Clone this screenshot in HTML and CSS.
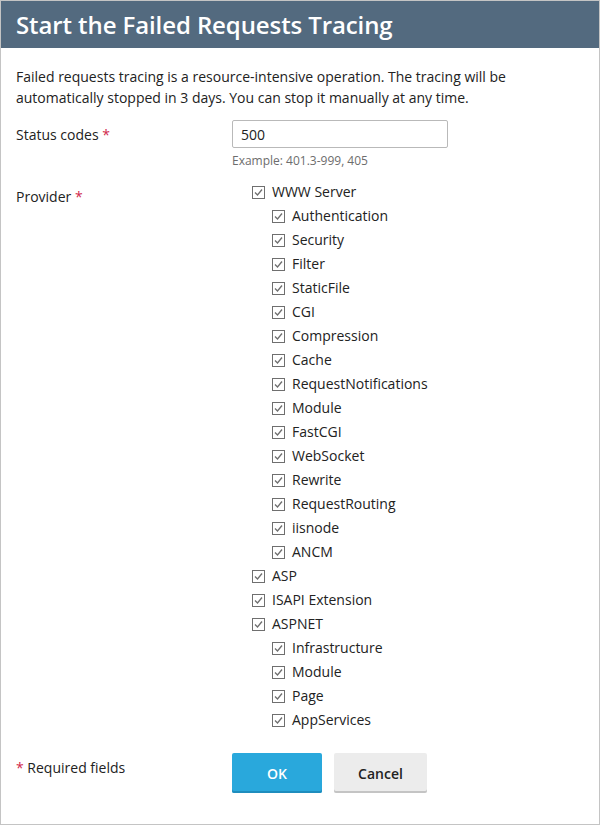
FILE: index.html
```html
<!DOCTYPE html>
<html>
<head>
<meta charset="utf-8">
<link rel="stylesheet" href="styles.css">
</head>
<body>
<div class="dialog">
  <div class="header"><h1 class="title">Start the Failed Requests Tracing</h1></div>
  <div class="content">
    <p class="intro">Failed requests tracing is a resource-intensive operation. The tracing will be automatically stopped in 3 days. You can stop it manually at any time.</p>
    <div class="row row-status">
      <div class="label">Status codes <span class="req">*</span></div>
      <div class="field">
        <input class="input" type="text" value="500">
        <div class="hint">Example: 401.3-999, 405</div>
      </div>
    </div>
    <div class="row row-provider">
      <div class="label label-provider">Provider <span class="req">*</span></div>
      <div class="field tree">
        <div class="cb"><span class="box"><svg width="13" height="13" viewBox="0 0 13 13"><rect x="0.5" y="0.5" width="12" height="12" fill="#fff" stroke="#6f6f6f"/><path d="M3 6.5 L5.5 9 L10 3.5" fill="none" stroke="#6f6f6f" stroke-width="1.3"/></svg></span>WWW Server</div>
        <div class="cb sub"><span class="box"><svg width="13" height="13" viewBox="0 0 13 13"><rect x="0.5" y="0.5" width="12" height="12" fill="#fff" stroke="#6f6f6f"/><path d="M3 6.5 L5.5 9 L10 3.5" fill="none" stroke="#6f6f6f" stroke-width="1.3"/></svg></span>Authentication</div>
        <div class="cb sub"><span class="box"><svg width="13" height="13" viewBox="0 0 13 13"><rect x="0.5" y="0.5" width="12" height="12" fill="#fff" stroke="#6f6f6f"/><path d="M3 6.5 L5.5 9 L10 3.5" fill="none" stroke="#6f6f6f" stroke-width="1.3"/></svg></span>Security</div>
        <div class="cb sub"><span class="box"><svg width="13" height="13" viewBox="0 0 13 13"><rect x="0.5" y="0.5" width="12" height="12" fill="#fff" stroke="#6f6f6f"/><path d="M3 6.5 L5.5 9 L10 3.5" fill="none" stroke="#6f6f6f" stroke-width="1.3"/></svg></span>Filter</div>
        <div class="cb sub"><span class="box"><svg width="13" height="13" viewBox="0 0 13 13"><rect x="0.5" y="0.5" width="12" height="12" fill="#fff" stroke="#6f6f6f"/><path d="M3 6.5 L5.5 9 L10 3.5" fill="none" stroke="#6f6f6f" stroke-width="1.3"/></svg></span>StaticFile</div>
        <div class="cb sub"><span class="box"><svg width="13" height="13" viewBox="0 0 13 13"><rect x="0.5" y="0.5" width="12" height="12" fill="#fff" stroke="#6f6f6f"/><path d="M3 6.5 L5.5 9 L10 3.5" fill="none" stroke="#6f6f6f" stroke-width="1.3"/></svg></span>CGI</div>
        <div class="cb sub"><span class="box"><svg width="13" height="13" viewBox="0 0 13 13"><rect x="0.5" y="0.5" width="12" height="12" fill="#fff" stroke="#6f6f6f"/><path d="M3 6.5 L5.5 9 L10 3.5" fill="none" stroke="#6f6f6f" stroke-width="1.3"/></svg></span>Compression</div>
        <div class="cb sub"><span class="box"><svg width="13" height="13" viewBox="0 0 13 13"><rect x="0.5" y="0.5" width="12" height="12" fill="#fff" stroke="#6f6f6f"/><path d="M3 6.5 L5.5 9 L10 3.5" fill="none" stroke="#6f6f6f" stroke-width="1.3"/></svg></span>Cache</div>
        <div class="cb sub"><span class="box"><svg width="13" height="13" viewBox="0 0 13 13"><rect x="0.5" y="0.5" width="12" height="12" fill="#fff" stroke="#6f6f6f"/><path d="M3 6.5 L5.5 9 L10 3.5" fill="none" stroke="#6f6f6f" stroke-width="1.3"/></svg></span>RequestNotifications</div>
        <div class="cb sub"><span class="box"><svg width="13" height="13" viewBox="0 0 13 13"><rect x="0.5" y="0.5" width="12" height="12" fill="#fff" stroke="#6f6f6f"/><path d="M3 6.5 L5.5 9 L10 3.5" fill="none" stroke="#6f6f6f" stroke-width="1.3"/></svg></span>Module</div>
        <div class="cb sub"><span class="box"><svg width="13" height="13" viewBox="0 0 13 13"><rect x="0.5" y="0.5" width="12" height="12" fill="#fff" stroke="#6f6f6f"/><path d="M3 6.5 L5.5 9 L10 3.5" fill="none" stroke="#6f6f6f" stroke-width="1.3"/></svg></span>FastCGI</div>
        <div class="cb sub"><span class="box"><svg width="13" height="13" viewBox="0 0 13 13"><rect x="0.5" y="0.5" width="12" height="12" fill="#fff" stroke="#6f6f6f"/><path d="M3 6.5 L5.5 9 L10 3.5" fill="none" stroke="#6f6f6f" stroke-width="1.3"/></svg></span>WebSocket</div>
        <div class="cb sub"><span class="box"><svg width="13" height="13" viewBox="0 0 13 13"><rect x="0.5" y="0.5" width="12" height="12" fill="#fff" stroke="#6f6f6f"/><path d="M3 6.5 L5.5 9 L10 3.5" fill="none" stroke="#6f6f6f" stroke-width="1.3"/></svg></span>Rewrite</div>
        <div class="cb sub"><span class="box"><svg width="13" height="13" viewBox="0 0 13 13"><rect x="0.5" y="0.5" width="12" height="12" fill="#fff" stroke="#6f6f6f"/><path d="M3 6.5 L5.5 9 L10 3.5" fill="none" stroke="#6f6f6f" stroke-width="1.3"/></svg></span>RequestRouting</div>
        <div class="cb sub"><span class="box"><svg width="13" height="13" viewBox="0 0 13 13"><rect x="0.5" y="0.5" width="12" height="12" fill="#fff" stroke="#6f6f6f"/><path d="M3 6.5 L5.5 9 L10 3.5" fill="none" stroke="#6f6f6f" stroke-width="1.3"/></svg></span>iisnode</div>
        <div class="cb sub"><span class="box"><svg width="13" height="13" viewBox="0 0 13 13"><rect x="0.5" y="0.5" width="12" height="12" fill="#fff" stroke="#6f6f6f"/><path d="M3 6.5 L5.5 9 L10 3.5" fill="none" stroke="#6f6f6f" stroke-width="1.3"/></svg></span>ANCM</div>
        <div class="cb"><span class="box"><svg width="13" height="13" viewBox="0 0 13 13"><rect x="0.5" y="0.5" width="12" height="12" fill="#fff" stroke="#6f6f6f"/><path d="M3 6.5 L5.5 9 L10 3.5" fill="none" stroke="#6f6f6f" stroke-width="1.3"/></svg></span>ASP</div>
        <div class="cb"><span class="box"><svg width="13" height="13" viewBox="0 0 13 13"><rect x="0.5" y="0.5" width="12" height="12" fill="#fff" stroke="#6f6f6f"/><path d="M3 6.5 L5.5 9 L10 3.5" fill="none" stroke="#6f6f6f" stroke-width="1.3"/></svg></span>ISAPI Extension</div>
        <div class="cb"><span class="box"><svg width="13" height="13" viewBox="0 0 13 13"><rect x="0.5" y="0.5" width="12" height="12" fill="#fff" stroke="#6f6f6f"/><path d="M3 6.5 L5.5 9 L10 3.5" fill="none" stroke="#6f6f6f" stroke-width="1.3"/></svg></span>ASPNET</div>
        <div class="cb sub"><span class="box"><svg width="13" height="13" viewBox="0 0 13 13"><rect x="0.5" y="0.5" width="12" height="12" fill="#fff" stroke="#6f6f6f"/><path d="M3 6.5 L5.5 9 L10 3.5" fill="none" stroke="#6f6f6f" stroke-width="1.3"/></svg></span>Infrastructure</div>
        <div class="cb sub"><span class="box"><svg width="13" height="13" viewBox="0 0 13 13"><rect x="0.5" y="0.5" width="12" height="12" fill="#fff" stroke="#6f6f6f"/><path d="M3 6.5 L5.5 9 L10 3.5" fill="none" stroke="#6f6f6f" stroke-width="1.3"/></svg></span>Module</div>
        <div class="cb sub"><span class="box"><svg width="13" height="13" viewBox="0 0 13 13"><rect x="0.5" y="0.5" width="12" height="12" fill="#fff" stroke="#6f6f6f"/><path d="M3 6.5 L5.5 9 L10 3.5" fill="none" stroke="#6f6f6f" stroke-width="1.3"/></svg></span>Page</div>
        <div class="cb sub"><span class="box"><svg width="13" height="13" viewBox="0 0 13 13"><rect x="0.5" y="0.5" width="12" height="12" fill="#fff" stroke="#6f6f6f"/><path d="M3 6.5 L5.5 9 L10 3.5" fill="none" stroke="#6f6f6f" stroke-width="1.3"/></svg></span>AppServices</div>
      </div>
    </div>
    <div class="row row-footer">
      <div class="label"><span class="req">*</span> Required fields</div>
      <div class="field buttons">
        <button class="btn btn-ok">OK</button>
        <button class="btn btn-cancel">Cancel</button>
      </div>
    </div>
  </div>
</div>
</body>
</html>
```

FILE: styles.css
```css
* { box-sizing: border-box; }
html, body { margin: 0; padding: 0; background: #fff; }
body {
  font-family: "Open Sans", "DejaVu Sans", sans-serif;
  font-size: 14px;
  color: #222;
}
.dialog {
  width: 600px;
  height: 825px;
  border: 1px solid #c4c4c4;
  display: flex;
  flex-direction: column;
}
.header {
  background: #536a7f;
  height: 47px;
  display: flex;
  align-items: center;
  padding: 0 15px;
}
.title {
  margin: 0;
  color: #fff;
  font-size: 24px;
  font-weight: 600;
  line-height: 30px;
  letter-spacing: -0.1px;
}
.content {
  padding: 18px 15px 0 15px;
}
.intro {
  margin: 0 0 12px 0;
  line-height: 21px;
}
.row {
  display: flex;
}
.label {
  width: 216px;
  flex: none;
  line-height: 21px;
}
.row-status .label { padding-top: 4px; }
.req { color: #d0284b; }
.field { flex: 1; }
.input {
  display: block;
  width: 216px;
  height: 28px;
  border: 1px solid #b9b9b9;
  border-radius: 2px;
  padding: 0 8px;
  font-family: "Open Sans", sans-serif;
  font-size: 14px;
  color: #222;
  outline: none;
}
.hint {
  font-size: 12px;
  color: #6d6d6d;
  line-height: 16px;
  margin-top: 5px;
}
.row-provider { margin-top: 11px; }
.label-provider { padding-top: 6px; }
.tree { padding-left: 20px; }
.cb {
  display: flex;
  align-items: center;
  height: 24px;
  line-height: 24px;
}
.cb.sub { padding-left: 20px; }
.box {
  width: 13px;
  height: 13px;
  margin-right: 7px;
  display: inline-flex;
}
.box svg { display: block; }
.row-footer { margin-top: 21px; }
.row-footer .label { padding-top: 4px; }
.buttons { display: flex; gap: 12px; }
.btn {
  height: 40px;
  border: none;
  border-radius: 2px;
  font-family: "Open Sans", sans-serif;
  font-size: 14px;
  font-weight: 600;
  cursor: pointer;
}
.btn-ok {
  width: 90px;
  background: #29a8dc;
  color: #fff;
  box-shadow: inset 0 -2px 0 #1f8dbd;
}
.btn-cancel {
  width: 93px;
  background: #ececec;
  color: #222;
  box-shadow: inset 0 -2px 0 #c4c4c4;
}
```
